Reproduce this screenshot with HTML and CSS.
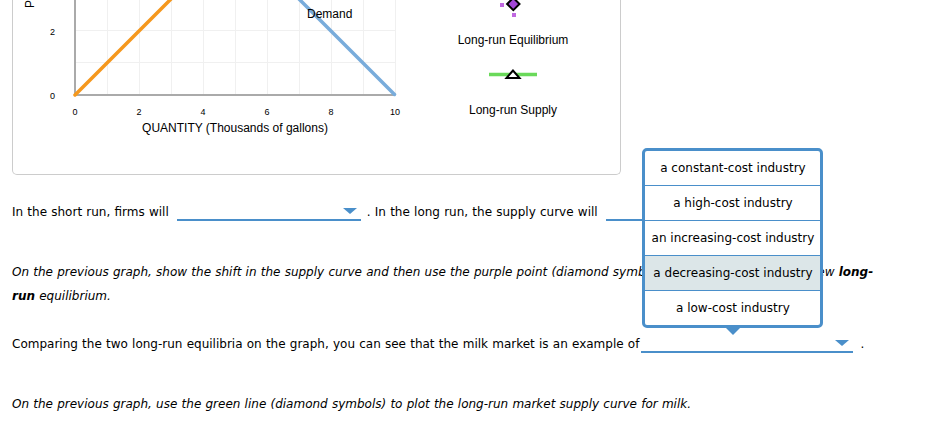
FILE: index.html
```html
<!DOCTYPE html>
<html lang="en">
<head>
<meta charset="utf-8">
<title>Milk market – long-run equilibrium</title>
<link rel="stylesheet" href="styles.css">
</head>
<body>
<div class="panel">
  <svg class="chart" width="420" height="175" viewBox="13 0 420 175" xmlns="http://www.w3.org/2000/svg">
    <g class="grid">
      <line x1="107.5" y1="0" x2="107.5" y2="95"/>
      <line x1="139.5" y1="0" x2="139.5" y2="95"/>
      <line x1="171.5" y1="0" x2="171.5" y2="95"/>
      <line x1="203.5" y1="0" x2="203.5" y2="95"/>
      <line x1="235.5" y1="0" x2="235.5" y2="95"/>
      <line x1="267.5" y1="0" x2="267.5" y2="95"/>
      <line x1="299.5" y1="0" x2="299.5" y2="95"/>
      <line x1="331.5" y1="0" x2="331.5" y2="95"/>
      <line x1="363.5" y1="0" x2="363.5" y2="95"/>
      <line x1="395.5" y1="0" x2="395.5" y2="95"/>
      <line x1="75" y1="62.5" x2="396" y2="62.5"/>
      <line x1="75" y1="30.5" x2="396" y2="30.5"/>
    </g>
    <g class="axes">
      <line x1="75" y1="0" x2="75" y2="96"/>
      <line x1="74" y1="95" x2="395" y2="95"/>
    </g>
    <line class="supply" x1="75" y1="95" x2="182" y2="-12"/>
    <line class="demand" x1="394.5" y1="94.5" x2="288" y2="-12"/>
    <text class="tick" x="52.5" y="98.5">0</text>
    <text class="tick" x="52.5" y="34.5">2</text>
    <text class="tick" x="75" y="114.5">0</text>
    <text class="tick" x="139" y="114.5">2</text>
    <text class="tick" x="203" y="114.5">4</text>
    <text class="tick" x="267" y="114.5">6</text>
    <text class="tick" x="331" y="114.5">8</text>
    <text class="tick" x="395" y="114.5">10</text>
    <text class="axis-title" x="235" y="131.5">QUANTITY (Thousands of gallons)</text>
    <text class="curve-label" x="307" y="18">Demand</text>
    <text class="y-title" transform="translate(34.3 8) rotate(-90)">PRICE (Dollars per gallon)</text>
  </svg>
  <div class="legend">
    <svg class="legend-icon icon-eq" width="60" height="18" viewBox="0 0 60 18" xmlns="http://www.w3.org/2000/svg">
      <rect class="handle" x="17" y="3" width="4" height="4"/>
      <rect class="handle" x="29" y="13" width="4" height="4"/>
      <polygon class="diamond" points="30.3,-2.2 36.5,4 30.3,10.2 24.1,4"/>
    </svg>
    <div class="legend-label label-eq">Long-run Equilibrium</div>
    <svg class="legend-icon icon-sup" width="60" height="14" viewBox="0 0 60 14" xmlns="http://www.w3.org/2000/svg">
      <line class="green" x1="6" y1="7.5" x2="54" y2="7.5"/>
      <polygon class="triangle" points="30,3.5 23.5,11 36.5,11"/>
    </svg>
    <div class="legend-label label-sup">Long-run Supply</div>
  </div>
</div>

<div class="questions">
  <div class="q q1">In the short run, firms will<span class="dd dd1">&nbsp;<span class="arrow"></span></span>. In the long run, the supply curve will<span class="dd dd2">&nbsp;<span class="arrow"></span></span></div>
  <div class="q q2 inst">On the previous graph, show the shift in the supply curve and then use the purple point (diamond symbols) to show the industry's new <b>long-run</b> equilibrium.</div>
  <div class="q q3">Comparing the two long-run equilibria on the graph, you can see that the milk market is an example of<span class="dd dd3">&nbsp;<span class="arrow"></span><span class="menu" role="listbox"><span class="opt">a constant-cost industry</span><span class="opt">a high-cost industry</span><span class="opt">an increasing-cost industry</span><span class="opt hl">a decreasing-cost industry</span><span class="opt">a low-cost industry</span></span></span>.</div>
  <div class="q q4 inst">On the previous graph, use the green line (diamond symbols) to plot the long-run market supply curve for milk.</div>
</div>
</body>
</html>
```

FILE: styles.css
```css
* {
  box-sizing: border-box;
}

body {
  margin: 0;
  background: #ffffff;
  color: #000000;
  font-family: Verdana, "DejaVu Sans", sans-serif;
  font-size: 12px;
}

/* ---------- graph panel ---------- */
.panel {
  display: flex;
  margin-left: 12px;
  width: 609px;
  height: 175px;
  border: 1px solid #cccccc;
  border-top: none;
  border-radius: 0 0 5px 5px;
}

.chart {
  display: block;
  flex: none;
}

.chart text {
  font-family: Arial, "Liberation Sans", sans-serif;
  fill: #000000;
}

.grid line {
  stroke: #f0f0f0;
  stroke-width: 1;
}

.axes line {
  stroke: #aaaaaa;
  stroke-width: 2;
}

.supply {
  stroke: #f5981e;
  stroke-width: 3.5;
  stroke-linecap: round;
}

.demand {
  stroke: #79acdb;
  stroke-width: 3.5;
  stroke-linecap: round;
}

.tick {
  font-size: 9px;
  text-anchor: middle;
}

.axis-title {
  font-size: 12px;
  text-anchor: middle;
}

.curve-label,
.y-title {
  font-size: 12px;
}

.legend {
  flex: none;
  width: 160px;
  display: flex;
  flex-direction: column;
  align-items: center;
  font-family: Arial, "Liberation Sans", sans-serif;
  font-size: 12px;
  line-height: 14px;
}

.legend-icon {
  display: block;
  flex: none;
}

.label-eq {
  margin-top: 15px;
}

.icon-sup {
  margin-top: 20px;
}

.label-sup {
  margin-top: 22px;
}

.handle {
  fill: #c068e0;
}

.diamond {
  fill: #a246d6;
  stroke: #000000;
  stroke-width: 2;
}

.green {
  stroke: #6ad95a;
  stroke-width: 3.5;
}

.triangle {
  fill: #ffffff;
  stroke: #000000;
  stroke-width: 2;
  stroke-linejoin: miter;
}

/* ---------- questions ---------- */
.questions {
  margin-left: 12px;
  width: 868px;
  line-height: 24px;
  word-spacing: 0.4px;
}

.q1 {
  margin-top: 25px;
}

.q2 {
  margin-top: 36px;
}

.q3 {
  margin-top: 24px;
}

.q4 {
  margin-top: 36px;
}

.inst {
  font-style: italic;
}

.dd {
  display: inline-block;
  position: relative;
  vertical-align: baseline;
  line-height: 14px;
  border-bottom: 2px solid #4a8fca;
}

.dd1 {
  width: 184px;
  margin: 0 6px 0 8px;
}

.dd2 {
  width: 184px;
  margin-left: 8px;
}

.dd3 {
  width: 212px;
  margin: 0 7px 0 2px;
}

.arrow {
  position: absolute;
  right: 4px;
  top: 3px;
  width: 0;
  height: 0;
  border-left: 7px solid transparent;
  border-right: 7px solid transparent;
  border-top: 6px solid #4a8fca;
}

.menu {
  position: absolute;
  left: 1px;
  bottom: 23px;
  z-index: 10;
  display: block;
  width: 181px;
  border: 3px solid #4a8fca;
  border-radius: 5px;
  background: #ffffff;
  word-spacing: normal;
}

.menu::after {
  content: "";
  position: absolute;
  left: 50%;
  top: calc(100% + 3px);
  margin-left: -7px;
  width: 0;
  height: 0;
  border-left: 7px solid transparent;
  border-right: 7px solid transparent;
  border-top: 7px solid #4a8fca;
}

.opt {
  display: block;
  height: 34px;
  line-height: 34px;
  text-align: center;
  white-space: nowrap;
}

.opt + .opt {
  height: 35px;
  border-top: 1px solid #4a8fca;
}

.opt.hl {
  background: #dce6e8;
}
```
